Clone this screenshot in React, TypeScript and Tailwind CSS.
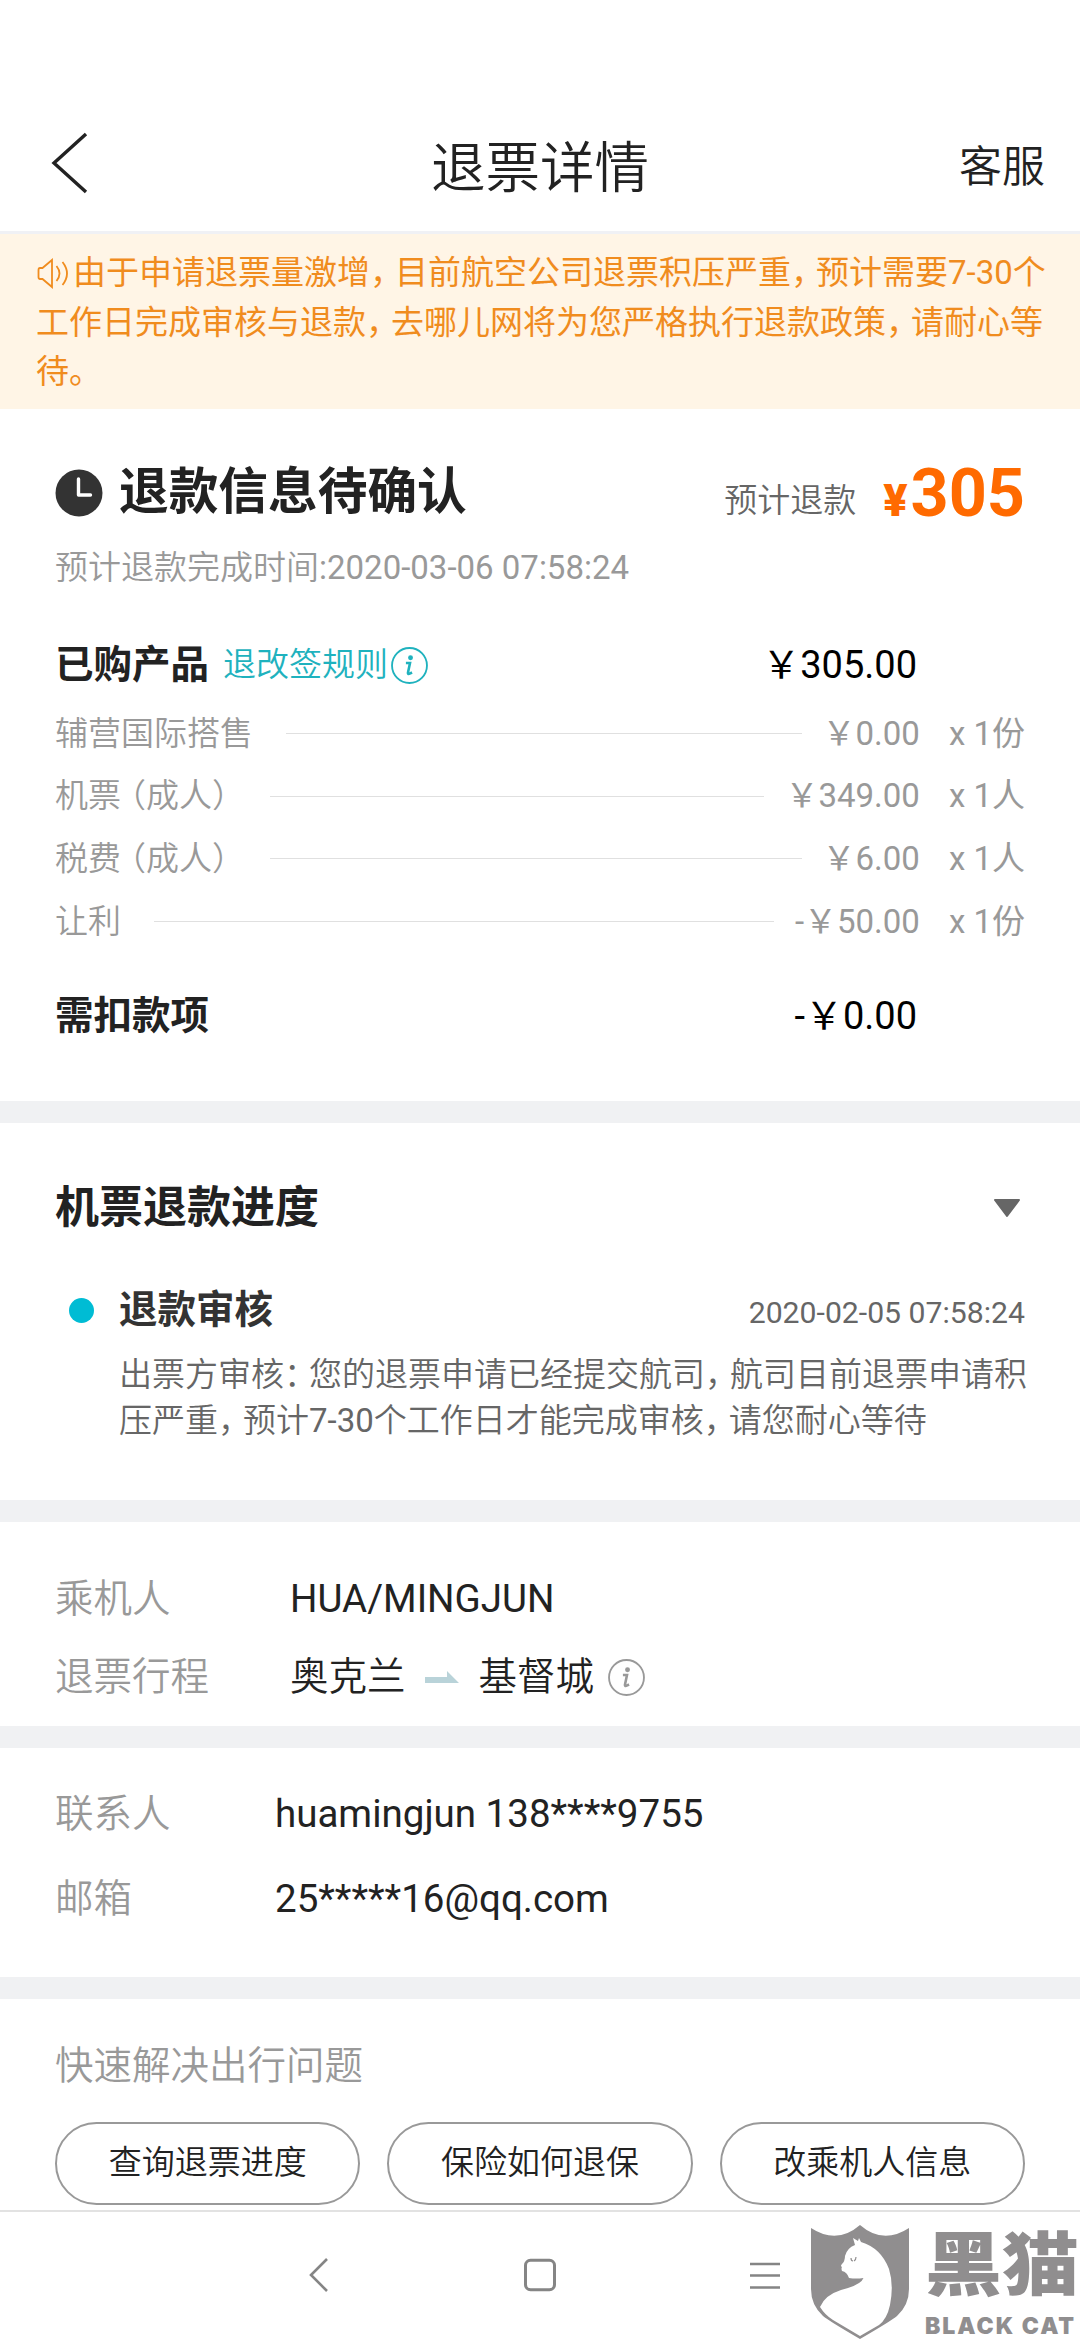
import React from 'react';

const feeRows = [
  { name: '辅营国际搭售', adult: false, price: '\uffe50.00', count: 'x 1份' },
  { name: '机票', adult: true, price: '\uffe5349.00', count: 'x 1人' },
  { name: '税费', adult: true, price: '\uffe56.00', count: 'x 1人' },
  { name: '让利', adult: false, price: '-\uffe550.00', count: 'x 1份' },
];

const quickLinks = ['查询退票进度', '保险如何退保', '改乘机人信息'];

// full-width punctuation, tightened a little
const Comma: React.FC = () => <span className="tracking-[-8px]">{'\uff0c'}</span>;

const InfoIcon: React.FC<{ className?: string }> = ({ className }) => (
  <svg viewBox="0 0 36 36" className={className} fill="none">
    <circle cx="18" cy="18" r="17" stroke="currentColor" strokeWidth="1.8" />
    <circle cx="19" cy="10.4" r="2.4" fill="currentColor" />
    <path d="M14.500 15.500h4l-2 9.500q-.2 1.500 1.200 1.100l2.800-1.300" stroke="currentColor" strokeWidth="2.500" />
  </svg>
);

const Divider: React.FC = () => <div className="h-[22px] shrink-0 bg-[#f0f1f3]" />;

const Header: React.FC = () => (
  <header className="h-[234px] shrink-0 border-b-[3px] border-[#f0f1f5] pt-[100px]">
    <div className="grid h-[134px] grid-cols-[1fr_auto_1fr] items-center px-[35px]">
      <svg className="mb-[8px] ml-[15px] h-[64px] w-[40px]" viewBox="0 0 40 64" fill="none">
        <path d="M36 3L4 32l32 29" stroke="#222" strokeWidth="3.4" />
      </svg>
      <h1 className="pt-[3px] text-[54.5px] font-[350] leading-none text-[#222]">退票详情</h1>
      <span className="justify-self-end text-[43px] font-[350] leading-none text-[#222]">客服</span>
    </div>
  </header>
);

const Notice: React.FC = () => (
  <div className="h-[175px] shrink-0 whitespace-nowrap bg-[#fff5e6] pl-[36px] pt-[14px] text-[33px] leading-[49.6px] text-[#f08c1e]">
    <div className="flex items-center">
      <svg className="mr-[2px] h-[34px] w-[35px]" viewBox="0 0 35 34" fill="none" stroke="currentColor" strokeWidth="1.8">
        <path d="M6.500 12L16 4v27l-9.500-8H4q-1.500 0-1.500-2v-7q0-2 1.500-2z" />
        <path d="M20.500 10q6 7.500 0 15M26.500 6q9 11.500 0 23" />
      </svg>
      <span>由于申请退票量激增<Comma />目前航空公司退票积压严重<Comma />预计需要7-30个</span>
    </div>
    <div>工作日完成审核与退款<Comma />去哪儿网将为您严格执行退款政策<Comma />请耐心等</div>
    <div>待。</div>
  </div>
);

const RefundSummary: React.FC = () => (
  <section className="h-[692px] shrink-0 px-[55px] pt-[53px]">
    <div className="flex h-[62px] items-center">
      <svg className="h-[48px] w-[48px]" viewBox="0 0 48 48" fill="none">
        <circle cx="24" cy="24" r="23.5" fill="#333" />
        <path d="M23.5 10v16h12" stroke="#fff" strokeWidth="3.4" strokeLinecap="round" strokeLinejoin="round" />
      </svg>
      <h2 className="ml-[16px] text-[49.7px] font-bold leading-none text-[#222]">退款信息待确认</h2>
      <div className="ml-auto flex items-baseline leading-none">
        <span className="relative -top-1 text-[33px] font-[350] text-[#666]">预计退款</span>
        <span className="ml-[27px] text-[45px] font-black text-[#ff6a00]">¥</span>
        <span className="ml-[3px] text-[66.5px] font-bold text-[#ff6a00]">305</span>
      </div>
    </div>
    <p className="mt-[18px] text-[33px] leading-[52px] text-[#999]">
      <span className="font-[350]">预计退款完成时间</span>:2020-03-06 07:58:24
    </p>

    <div className="mt-[45px] flex h-[52px] items-center">
      <h3 className="text-[38.5px] font-bold text-[#222]">已购产品</h3>
      <span className="ml-[14px] text-[33px] font-[350] text-[#1fb2be]">退改签规则</span>
      <InfoIcon className="ml-[3px] size-[37px] text-[#1fb2be]" />
      <span className="ml-auto mr-[108px] text-[38px] text-black">{'\uffe5'}305.00</span>
    </div>

    <ul className="mt-[11px]">
      {feeRows.map((row) => (
        <li key={row.name} className="flex h-[62.8px] items-center text-[33px] text-[#999]">
          <span className="font-[350]">
            {row.name}
            {row.adult && (
              <>
                <span className="ml-[8.5px] [font-feature-settings:'halt']">{'\uff08'}</span>
                成人
                <span className="mr-[8.5px] [font-feature-settings:'halt']">{'\uff09'}</span>
              </>
            )}
          </span>
          <span className="ml-[33px] mr-[21px] h-px flex-1 bg-[#e0e0e0]" />
          <span>{row.price}</span>
          <span className="ml-[29px]">{row.count}</span>
        </li>
      ))}
    </ul>

    <div className="mt-[37px] flex h-[52px] items-center">
      <h3 className="text-[38.5px] font-bold text-[#222]">需扣款项</h3>
      <span className="ml-auto mr-[108px] text-[38px] text-black">-{'\uffe5'}0.00</span>
    </div>
  </section>
);

const RefundProgress: React.FC = () => (
  <section className="h-[377px] shrink-0 px-[55px] pt-[55px]">
    <div className="flex h-[60px] items-center justify-between">
      <h2 className="text-[44px] font-bold text-[#222]">机票退款进度</h2>
      <svg className="mr-[4px] h-[19px] w-[28px]" viewBox="0 0 28 19">
        <path d="M2 1h24L14 17z" fill="#666" stroke="#666" strokeWidth="2" strokeLinejoin="round" />
      </svg>
    </div>
    <div className="mt-[46px] flex h-[52px] items-center pl-[14px]">
      <span className="size-[25px] rounded-full bg-[#00bcd4]" />
      <h3 className="ml-[25px] text-[38.5px] font-bold text-[#333]">退款审核</h3>
      <span className="ml-auto pt-[6px] text-[30.2px] text-[#666]">2020-02-05 07:58:24</span>
    </div>
    <div className="mt-[16px] whitespace-nowrap pl-[64px] text-[33px] font-[350] leading-[45.7px] text-[#666]">
      <div>出票方审核<span className="tracking-[-8px]">{'\uff1a'}</span>您的退票申请已经提交航司<Comma />航司目前退票申请积</div>
      <div>压严重<Comma />预计<span className="font-normal">7-30</span>个工作日才能完成审核<Comma />请您耐心等待</div>
    </div>
  </section>
);

const Passenger: React.FC = () => (
  <section className="h-[204px] shrink-0 px-[55px] pt-[38px] text-[38.5px] text-[#222]">
    <div className="flex h-[78px] items-center">
      <span className="w-[235px] font-[350] text-[#999]">乘机人</span>
      <span>HUA/MINGJUN</span>
    </div>
    <div className="flex h-[78px] items-center">
      <span className="w-[235px] font-[350] text-[#999]">退票行程</span>
      <span className="font-[350]">奥克兰</span>
      <svg className="ml-[19px] mr-[20px] h-[12px] w-[34px]" viewBox="0 0 34 12">
        <path d="M0 6h22V0l12 12H0z" fill="#b9d3d9" />
      </svg>
      <span className="font-[350]">基督城</span>
      <InfoIcon className="ml-[14px] size-[37px] text-[#999]" />
    </div>
  </section>
);

const Contact: React.FC = () => (
  <section className="h-[229px] shrink-0 px-[55px] pt-[23px] text-[38.5px] text-[#222]">
    <div className="flex h-[85px] items-center">
      <span className="w-[220px] font-[350] text-[#999]">联系人</span>
      <span>huamingjun 138****9755</span>
    </div>
    <div className="flex h-[85px] items-center">
      <span className="w-[220px] font-[350] text-[#999]">邮箱</span>
      <span>25*****16@qq.com</span>
    </div>
  </section>
);

const QuickHelp: React.FC = () => (
  <section className="h-[211px] shrink-0 px-[55px] pt-[40px]">
    <p className="text-[38.5px] font-[350] leading-[54px] text-[#999]">快速解决出行问题</p>
    <div className="mt-[29px] flex gap-[27px]">
      {quickLinks.map((label) => (
        <button key={label} className="flex h-[83px] w-[306px] items-center justify-center rounded-full border-2 border-[#999] pb-[2px] text-[33px] font-[350] text-[#222]">
          {label}
        </button>
      ))}
    </div>
  </section>
);

const BlackCatMark: React.FC = () => (
  <div className="absolute bottom-0 right-[2px] flex h-[115px] items-start text-[#908e8f]">
    <svg className="h-[115px] w-[98px]" viewBox="0 0 98 115">
      <path fill="currentColor" d="M0 3Q26 20 49 0Q72 20 98 3V64Q98 80 86 91Q80 96 49 114Q18 96 12 91Q0 80 0 64z" />
      <path fill="#fff" d="M44 20L42 13l5 3 1-3 2 4Q70 23 78 44Q83 60 79 80Q76 94 68 100L49 111L22 95Q14 90 9 82Q14 70 30 65Q50 60 52.500 53Q45 54 38 53Q36 47 31 46Q30 43 31 42Q29 41 31 39Q34 36 34 31Q36 23 44 20z" />
      <path d="M40 33q0 3 2 3M43 36q2-1 2-4" stroke="currentColor" strokeWidth="1.2" fill="none" />
    </svg>
    <div className="ml-[16px] flex w-[153px] flex-col whitespace-nowrap">
      <span className="mt-[3px] origin-center scale-y-90 text-[77px] font-black leading-[78px]">黑猫</span>
      <span className="mt-[8px] font-[Inter,sans-serif] text-[23px] font-black leading-[24px] tracking-[2px]">BLACK CAT</span>
    </div>
  </div>
);

const NavBar: React.FC = () => (
  <nav className="relative flex h-[130px] shrink-0 items-start border-t-2 border-[#e2e2e2] pl-[308px] pt-[46px]">
    <svg className="h-[34px] w-[472px]" viewBox="0 0 472 34" fill="none" stroke="#858585" strokeWidth="2.6">
      <path d="M19 1L3 17l16 16" />
      <rect x="217.5" y="2.3" width="29" height="29.4" rx="5" strokeWidth="3" />
      <path d="M442 6h30M442 17.5h30M442 29.500h30" />
    </svg>
    <BlackCatMark />
  </nav>
);

const App: React.FC = () => {
  return (
    <div className="flex h-[2340px] w-[1080px] flex-col overflow-hidden bg-white font-[Roboto,'Noto_Sans_CJK_SC',sans-serif]">
      <Header />
      <Notice />
      <RefundSummary />
      <Divider />
      <RefundProgress />
      <Divider />
      <Passenger />
      <Divider />
      <Contact />
      <Divider />
      <QuickHelp />
      <NavBar />
    </div>
  );
};

export default App;
